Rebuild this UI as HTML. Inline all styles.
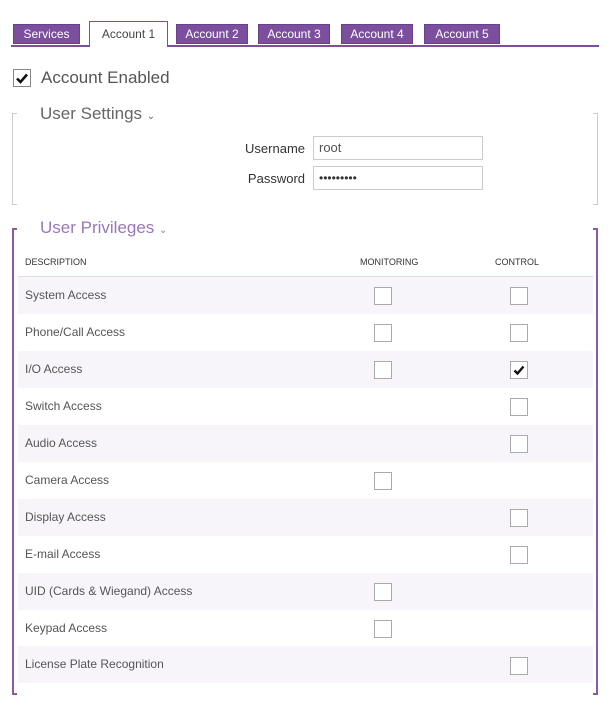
<!DOCTYPE html>
<html><head><style>
body{margin:0;width:616px;height:708px;background:#fff;font-family:"Liberation Sans",sans-serif;position:relative;overflow:hidden;color:#333}
.a{position:absolute}
.tab{position:absolute;top:24px;height:18px;background:#7b4f9e;color:#fff;font-size:12px;line-height:18px;text-align:center;border:1px solid #6a3f8c}
.cb{position:absolute;width:16px;height:16px;border:1px solid #aaa;background:#fff}
.row{position:absolute;left:18px;width:575px;height:37px;font-size:12px;line-height:37px;text-indent:7px;color:#555}
.sh{background:#f7f5fa}
</style></head><body>
<div class="tab" style="left:13px;width:65px">Services</div>
<div class="a" style="left:89px;top:21px;width:77px;height:25px;border:1px solid #7b4f9e;border-bottom:none;background:#fff;font-size:12px;line-height:24px;text-align:center;color:#444;z-index:2">Account 1</div>
<div class="tab" style="left:176px;width:70px">Account 2</div>
<div class="tab" style="left:258px;width:70px">Account 3</div>
<div class="tab" style="left:341px;width:70px">Account 4</div>
<div class="tab" style="left:424px;width:74px">Account 5</div>
<div class="a" style="left:11px;top:45px;width:588px;height:2px;background:#7b4f9e"></div>

<div class="cb" style="left:13px;top:69px;border-color:#888"></div>
<svg class="a" style="left:14px;top:70px" width="16" height="16" viewBox="0 0 16 16"><path d="M3 8.5 L6.5 12 L13 4.5" fill="none" stroke="#111" stroke-width="2.6"/></svg>
<div class="a" style="left:41px;top:68px;font-size:17px;color:#555">Account Enabled</div>

<div class="a" style="left:12px;top:113px;width:1px;height:92px;background:#ccc"></div>
<div class="a" style="left:12px;top:113px;width:5px;height:1px;background:#ccc"></div>
<div class="a" style="left:12px;top:204px;width:5px;height:1px;background:#ccc"></div>
<div class="a" style="left:597px;top:113px;width:1px;height:92px;background:#ccc"></div>
<div class="a" style="left:593px;top:113px;width:5px;height:1px;background:#ccc"></div>
<div class="a" style="left:593px;top:204px;width:5px;height:1px;background:#ccc"></div>
<div class="a" style="left:40px;top:104px;font-size:17px;color:#666">User Settings <span style="font-size:10px">⌄</span></div>
<div class="a" style="left:200px;top:141px;width:105px;text-align:right;font-size:13px;color:#333">Username</div>
<div class="a" style="left:313px;top:136px;width:168px;height:22px;border:1px solid #ccc;font-size:13px;line-height:22px;text-indent:5px;color:#555">root</div>
<div class="a" style="left:200px;top:171px;width:105px;text-align:right;font-size:13px;color:#333">Password</div>
<div class="a" style="left:313px;top:166px;width:168px;height:22px;border:1px solid #ccc;font-size:12px;line-height:22px;text-indent:5px;color:#333;letter-spacing:0px">•••••••••</div>

<div class="a" style="left:12px;top:228px;width:2px;height:467px;background:#8a5aaa"></div>
<div class="a" style="left:12px;top:228px;width:5px;height:2px;background:#8a5aaa"></div>
<div class="a" style="left:12px;top:693px;width:5px;height:2px;background:#8a5aaa"></div>
<div class="a" style="left:596px;top:228px;width:2px;height:467px;background:#8a5aaa"></div>
<div class="a" style="left:593px;top:228px;width:5px;height:2px;background:#8a5aaa"></div>
<div class="a" style="left:593px;top:693px;width:5px;height:2px;background:#8a5aaa"></div>
<div class="a" style="left:40px;top:218px;font-size:17px;color:#9a78b8">User Privileges <span style="font-size:10px">⌄</span></div>
<div class="a" style="left:25px;top:257px;font-size:9px;color:#333">DESCRIPTION</div>
<div class="a" style="left:360px;top:257px;font-size:9px;color:#333">MONITORING</div>
<div class="a" style="left:495px;top:257px;font-size:9px;color:#333">CONTROL</div>
<div class="a" style="left:18px;top:276px;width:575px;height:1px;background:#ddd"></div>

<div class="row sh" style="top:277px">System Access</div>
<div class="row" style="top:314px">Phone/Call Access</div>
<div class="row sh" style="top:351px">I/O Access</div>
<div class="row" style="top:388px">Switch Access</div>
<div class="row sh" style="top:425px">Audio Access</div>
<div class="row" style="top:462px">Camera Access</div>
<div class="row sh" style="top:499px">Display Access</div>
<div class="row" style="top:536px">E-mail Access</div>
<div class="row sh" style="top:573px">UID (Cards &amp; Wiegand) Access</div>
<div class="row" style="top:610px">Keypad Access</div>
<div class="row sh" style="top:646px">License Plate Recognition</div>

<div class="cb" style="left:374px;top:287px"></div><div class="cb" style="left:510px;top:287px"></div>
<div class="cb" style="left:374px;top:324px"></div><div class="cb" style="left:510px;top:324px"></div>
<div class="cb" style="left:374px;top:361px"></div><div class="cb" style="left:510px;top:361px"></div>
<svg class="a" style="left:511px;top:362px" width="16" height="16" viewBox="0 0 16 16"><path d="M3.5 8.5 L6.5 11.5 L12.5 4.5" fill="none" stroke="#111" stroke-width="2.4"/></svg>
<div class="cb" style="left:510px;top:398px"></div>
<div class="cb" style="left:510px;top:435px"></div>
<div class="cb" style="left:374px;top:472px"></div>
<div class="cb" style="left:510px;top:509px"></div>
<div class="cb" style="left:510px;top:546px"></div>
<div class="cb" style="left:374px;top:583px"></div>
<div class="cb" style="left:374px;top:620px"></div>
<div class="cb" style="left:510px;top:657px"></div>
</body></html>
